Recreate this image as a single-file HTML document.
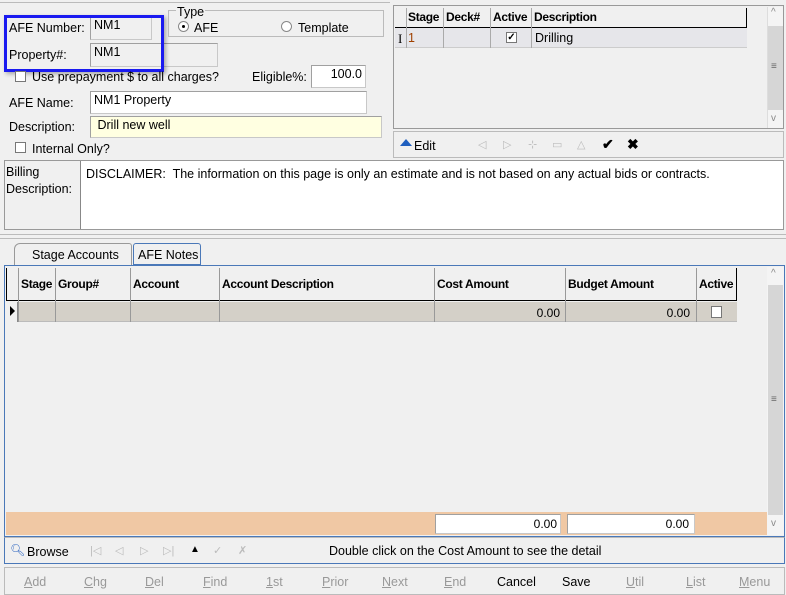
<!DOCTYPE html><html><head><style>
*{box-sizing:border-box}
body{margin:0;width:786px;height:595px;background:#f0f0f0;font-family:"Liberation Sans",sans-serif;font-size:12px;color:#000;position:relative;overflow:hidden}
.a{position:absolute;white-space:nowrap}
.in{position:absolute;border:1px solid #c8c8c8;border-top-color:#a0a0a0;border-left-color:#a0a0a0;padding:1px 3px;font-size:12.5px}
.cb{position:absolute;width:11px;height:11px;border:1px solid #777;background:#fff}
.hd{position:absolute;font-weight:bold;font-size:12px;letter-spacing:-0.3px}
.g{color:#999}
.ic{position:absolute;color:#bbb;font-size:11px}
</style></head><body>
<div class="a" style="left:0;top:0;width:390px;height:3px;border-bottom:1px solid #bbb"></div>
<!-- left form -->
<div class="a" style="left:9px;top:21px;font-size:12.5px">AFE Number:</div>
<div class="in" style="left:90px;top:16px;width:62px;height:24px">NM1</div>
<div class="a" style="left:9px;top:48px;font-size:12.5px">Property#:</div>
<div class="in" style="left:90px;top:43px;width:128px;height:24px">NM1</div>
<div class="a" style="left:4px;top:15px;width:160px;height:57px;border:3px solid #1a1af0;box-shadow:2px 2px 4px rgba(0,0,0,.3)"></div>
<div class="a" style="left:168px;top:10px;width:216px;height:27px;border:1px solid #bbb"></div>
<div class="a" style="left:176px;top:5px;background:#f0f0f0;font-size:12.5px;padding:0 1px">Type</div>
<div class="a" style="left:178px;top:21px;width:11px;height:11px;border:1px solid #888;border-radius:50%;background:#fff"><div style="margin:3px;width:3px;height:3px;background:#000;border-radius:50%"></div></div>
<div class="a" style="left:194px;top:21px;font-size:12.5px">AFE</div>
<div class="a" style="left:281px;top:21px;width:11px;height:11px;border:1px solid #888;border-radius:50%;background:#fff"></div>
<div class="a" style="left:298px;top:21px;font-size:12.5px">Template</div>
<div class="cb" style="left:15px;top:71px"></div>
<div class="a" style="left:32px;top:70px;font-size:12.5px">Use prepayment $ to all charges?</div>
<div class="a" style="left:252px;top:70px;font-size:12.5px">Eligible%:</div>
<div class="in" style="left:311px;top:65px;width:55px;height:23px;background:#fff;text-align:right">100.0</div>
<div class="a" style="left:9px;top:96px;font-size:12.5px">AFE Name:</div>
<div class="in" style="left:90px;top:91px;width:277px;height:23px;background:#fff">NM1 Property</div>
<div class="a" style="left:9px;top:120px;font-size:12.5px">Description:</div>
<div class="in" style="left:90px;top:116px;width:292px;height:22px;background:#ffffe1">&nbsp;Drill new well</div>
<div class="cb" style="left:15px;top:142px"></div>
<div class="a" style="left:32px;top:142px;font-size:12.5px">Internal Only?</div>
<!-- right top grid -->
<div class="a" style="left:393px;top:5px;width:391px;height:124px;border:1px solid #999;background:#f0f0f0"></div>
<div class="a" style="left:395px;top:8px;width:352px;height:20px;border-bottom:1px solid #000;border-right:1px solid #000"></div>
<div class="a" style="left:395px;top:28px;width:352px;height:20px;background:#e6e6ea;border-bottom:1px solid #ccc"></div>
<div class="a" style="left:406px;top:8px;height:40px;border-left:1px solid #aaa"></div>
<div class="a" style="left:443px;top:8px;height:40px;border-left:1px solid #aaa"></div>
<div class="a" style="left:490px;top:8px;height:40px;border-left:1px solid #aaa"></div>
<div class="a" style="left:531px;top:8px;height:40px;border-left:1px solid #aaa"></div>
<div class="hd" style="left:408px;top:10px">Stage</div><div class="hd" style="left:446px;top:10px">Deck#</div><div class="hd" style="left:493px;top:10px">Active</div><div class="hd" style="left:534px;top:10px">Description</div>
<div class="a" style="left:398px;top:31px;font-family:'Liberation Serif';font-size:13px">I</div>
<div class="a" style="left:408px;top:31px;color:#a04000;font-size:12.5px">1</div>
<div class="cb" style="left:506px;top:32px;font-size:10px;line-height:9px;text-align:center;font-weight:bold">✓</div>
<div class="a" style="left:535px;top:31px;font-size:12.5px">Drilling</div>
<div class="a" style="left:767px;top:7px;width:16px;height:121px;background:#f4f4f4;border-left:1px solid #ddd"></div>
<div class="a" style="left:768px;top:26px;width:15px;height:84px;background:#d6d6d6"></div>
<div class="a" style="left:771px;top:7px;color:#888;font-size:10px">^</div>
<div class="a" style="left:771px;top:61px;color:#666;font-size:10px">≡</div>
<div class="a" style="left:771px;top:113px;color:#888;font-size:10px">v</div>
<div class="a" style="left:393px;top:131px;width:391px;height:27px;border:1px solid #bbb"></div>
<div class="a" style="left:400px;top:139px;width:0;height:0;border-left:6px solid transparent;border-right:6px solid transparent;border-bottom:7px solid #1f5fbf"></div>
<div class="a" style="left:414px;top:139px;font-size:12.5px">Edit</div>
<div class="ic" style="left:478px;top:138px">◁</div>
<div class="ic" style="left:503px;top:138px">▷</div>
<div class="ic" style="left:528px;top:138px">⊹</div>
<div class="ic" style="left:552px;top:138px">▭</div>
<div class="ic" style="left:577px;top:138px">△</div>
<div class="a" style="left:602px;top:136px;font-size:14px;font-weight:bold">✔</div>
<div class="a" style="left:627px;top:136px;font-size:14px;font-weight:bold">✖</div>
<!-- billing -->
<div class="a" style="left:4px;top:160px;width:780px;height:70px;border:1px solid #999"></div>
<div class="a" style="left:6px;top:164px;font-size:12.5px;line-height:17px">Billing<br>Description:</div>
<div class="a" style="left:80px;top:161px;width:703px;height:68px;background:#fff;border-left:1px solid #888"></div>
<div class="a" style="left:86px;top:167px;font-size:12.5px">DISCLAIMER:&nbsp; The information on this page is only an estimate and is not based on any actual bids or contracts.</div>
<div class="a" style="left:0;top:234px;width:786px;height:5px;border-top:1px solid #bbb;border-bottom:1px solid #bbb"></div>
<!-- tabs -->
<div class="a" style="left:14px;top:243px;width:118px;height:23px;border:1px solid #999;border-bottom:none;border-radius:6px 3px 0 0;background:#f0f0f0"></div>
<div class="a" style="left:32px;top:248px;font-size:12.5px">Stage Accounts</div>
<div class="a" style="left:133px;top:243px;width:68px;height:22px;border:1px solid #4a78b8;border-radius:3px 3px 0 0"></div>
<div class="a" style="left:138px;top:248px;font-size:12.5px">AFE Notes</div>
<!-- lower grid -->
<div class="a" style="left:4px;top:265px;width:781px;height:272px;border:1px solid #4a78b8"></div>
<div class="a" style="left:6px;top:268px;width:731px;height:33px;border-bottom:1px solid #000;border-right:1px solid #000;border-left:1px solid #000"></div>
<div class="a" style="left:6px;top:302px;width:731px;height:20px;background:#d4d0c8;border-bottom:1px solid #bbb"></div>
<div class="a" style="left:6px;top:302px;width:12px;height:20px;background:#f0f0f0;border-right:1px solid #888"></div>
<div class="a" style="left:10px;top:306px;width:0;height:0;border-top:5px solid transparent;border-bottom:5px solid transparent;border-left:5px solid #000"></div>
<div class="a" style="left:18px;top:268px;height:54px;border-left:1px solid #999"></div>
<div class="a" style="left:55px;top:268px;height:54px;border-left:1px solid #999"></div>
<div class="a" style="left:130px;top:268px;height:54px;border-left:1px solid #999"></div>
<div class="a" style="left:219px;top:268px;height:54px;border-left:1px solid #999"></div>
<div class="a" style="left:434px;top:268px;height:54px;border-left:1px solid #999"></div>
<div class="a" style="left:565px;top:268px;height:54px;border-left:1px solid #999"></div>
<div class="a" style="left:696px;top:268px;height:54px;border-left:1px solid #999"></div>
<div class="hd" style="left:21px;top:277px">Stage</div><div class="hd" style="left:58px;top:277px">Group#</div><div class="hd" style="left:133px;top:277px">Account</div><div class="hd" style="left:222px;top:277px">Account Description</div><div class="hd" style="left:437px;top:277px">Cost Amount</div><div class="hd" style="left:568px;top:277px">Budget Amount</div><div class="hd" style="left:699px;top:277px">Active</div>
<div class="a" style="left:500px;top:306px;width:60px;text-align:right;font-size:12px">0.00</div>
<div class="a" style="left:630px;top:306px;width:60px;text-align:right;font-size:12px">0.00</div>
<div class="cb" style="left:711px;top:306px;height:12px"></div>
<div class="a" style="left:767px;top:267px;width:17px;height:268px;background:#f4f4f4"></div>
<div class="a" style="left:768px;top:285px;width:15px;height:230px;background:#d6d6d6"></div>
<div class="a" style="left:771px;top:268px;color:#888;font-size:10px">^</div>
<div class="a" style="left:771px;top:394px;color:#666;font-size:10px">≡</div>
<div class="a" style="left:771px;top:518px;color:#888;font-size:10px">v</div>
<div class="a" style="left:6px;top:512px;width:761px;height:23px;background:#f0c8a4"></div>
<div class="in" style="left:435px;top:514px;width:126px;height:20px;background:#fff;text-align:right;font-size:12px;padding:2px 3px">0.00</div>
<div class="in" style="left:567px;top:514px;width:128px;height:20px;background:#fff;text-align:right;font-size:12px;padding:2px 5px">0.00</div>
<!-- browse bar -->
<div class="a" style="left:4px;top:537px;width:781px;height:27px;border:1px solid #4a78b8;border-top:1px solid #bbb"></div>
<div class="a" style="left:10px;top:543px;color:#2f66c0;font-size:12px">🔍︎</div>
<div class="a" style="left:27px;top:545px;font-size:12.5px">Browse</div>
<div class="ic" style="left:90px;top:544px">|◁</div>
<div class="ic" style="left:115px;top:544px">◁</div>
<div class="ic" style="left:140px;top:544px">▷</div>
<div class="ic" style="left:163px;top:544px">▷|</div>
<div class="a" style="left:190px;top:544px;font-size:10px">▲</div>
<div class="ic" style="left:213px;top:544px">✓</div>
<div class="ic" style="left:238px;top:544px">✗</div>
<div class="a" style="left:329px;top:544px;font-size:12.5px">Double click on the Cost Amount to see the detail</div>
<!-- bottom buttons -->
<div class="a" style="left:4px;top:567px;width:781px;height:28px;border:1px solid #bbb"></div>
<div class="a" style="left:0;top:575px;width:786px;font-size:12.5px">
<span class="a g" style="left:24px"><u>A</u>dd</span>
<span class="a g" style="left:84px"><u>C</u>hg</span>
<span class="a g" style="left:145px"><u>D</u>el</span>
<span class="a g" style="left:203px"><u>F</u>ind</span>
<span class="a g" style="left:266px"><u>1</u>st</span>
<span class="a g" style="left:322px"><u>P</u>rior</span>
<span class="a g" style="left:382px"><u>N</u>ext</span>
<span class="a g" style="left:444px"><u>E</u>nd</span>
<span class="a" style="left:497px">Cancel</span>
<span class="a" style="left:562px">Save</span>
<span class="a g" style="left:626px"><u>U</u>til</span>
<span class="a g" style="left:686px"><u>L</u>ist</span>
<span class="a g" style="left:739px"><u>M</u>enu</span>
</div>
</body></html>
